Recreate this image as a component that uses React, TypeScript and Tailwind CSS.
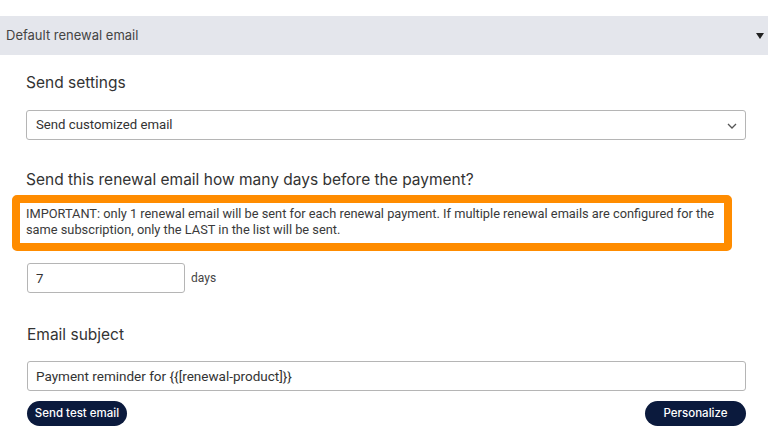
import React, { useState } from 'react';

export default function App() {
  const [sendMode, setSendMode] = useState('custom');
  const [days, setDays] = useState('7');
  const [subject, setSubject] = useState('Payment reminder for {{[renewal-product]}}');

  return (
    <div className="w-[768px] h-[448px] bg-white overflow-hidden font-['Inter',sans-serif] text-[#333]">
      <div className="h-4" />
      {/* Header bar */}
      <div className="h-[39px] bg-[#e4e6ec] flex items-center justify-between pl-[6px] pr-[4px]">
        <span className="text-[13px] text-[#444]">Default renewal email</span>
        <svg width="8" height="6" viewBox="0 0 8 6" className="mt-[1px]">
          <path d="M0 0 L8 0 L4 6 Z" fill="#222" />
        </svg>
      </div>

      <div className="pl-[26px] pr-[22px]">
        {/* Send settings */}
        <h3 className="mt-[18px] text-[15.5px] leading-[20px] text-[#333]">Send settings</h3>
        <div className="relative mt-[17px]">
          <select
            value={sendMode}
            onChange={(e) => setSendMode(e.target.value)}
            className="appearance-none w-full h-[30px] border border-[#b5b5b5] rounded-[3px] pl-[9px] text-[13.2px] text-[#333] bg-white font-['Roboto',sans-serif] outline-none"
          >
            <option value="custom">Send customized email</option>
            <option value="default">Send default email</option>
          </select>
          <svg width="10" height="6" viewBox="0 0 10 6" className="absolute right-[9px] top-[13px] pointer-events-none">
            <path d="M1 1 L5 5 L9 1" stroke="#555" strokeWidth="1.3" fill="none" />
          </svg>
        </div>

        <h3 className="mt-[30px] text-[15.5px] leading-[20px] text-[#333]">
          Send this renewal email how many days before the payment?
        </h3>
      </div>

      {/* Highlighted notice */}
      <div className="ml-[12px] w-[720px] mt-[5px] border-[8px] border-[#ff8c00] rounded-[5px] bg-white pl-[6px] pr-[2px] pt-[3px] pb-[5px]">
        <p className="text-[12.8px] leading-[16px] text-[#3a3a3a] font-['Roboto',sans-serif]">
          IMPORTANT: only 1 renewal email will be sent for each renewal payment. If multiple renewal emails are configured for the same subscription, only the LAST in the list will be sent.
        </p>
      </div>

      <div className="pl-[27px] pr-[22px]">
        <div className="mt-[12px] flex items-center gap-[6px]">
          <input
            value={days}
            onChange={(e) => setDays(e.target.value)}
            className="w-[158px] h-[30px] border border-[#b5b5b5] rounded-[3px] px-[8px] text-[13.2px] text-[#333] font-['Roboto',sans-serif] outline-none"
          />
          <span className="text-[12px] text-[#444] font-['Roboto',sans-serif]">days</span>
        </div>

        <h3 className="mt-[32px] text-[15.5px] leading-[20px] text-[#333]">Email subject</h3>
        <input
          value={subject}
          onChange={(e) => setSubject(e.target.value)}
          className="mt-[16px] w-full h-[30px] border border-[#b5b5b5] rounded-[3px] px-[8px] text-[13.5px] text-[#333] font-['Roboto',sans-serif] outline-none"
        />

        <div className="mt-[10px] flex items-center justify-between">
          <button className="h-[25px] w-[100px] rounded-full bg-[#0b1a3d] text-white text-[11.5px] font-medium">
            Send test email
          </button>
          <button className="h-[25px] w-[101px] rounded-full bg-[#0b1a3d] text-white text-[11.5px] font-medium">
            Personalize
          </button>
        </div>
      </div>
    </div>
  );
}
